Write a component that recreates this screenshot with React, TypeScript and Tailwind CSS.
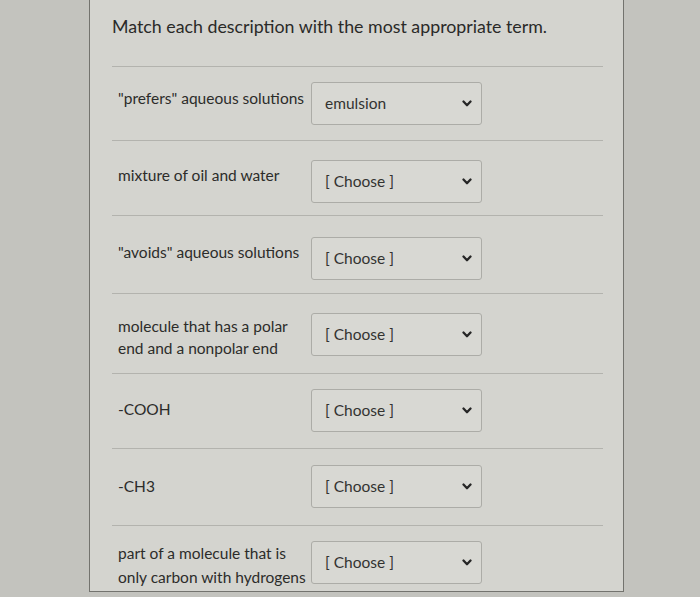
import React from "react";

type Row = {
  label: string[];
  value: string;
  rowClass: string;
  labelClass: string;
};

const rows: Row[] = [
  { label: ['"prefers" aqueous solutions'], value: "emulsion", rowClass: "h-[74px] pt-[15px]", labelClass: "-mt-[11px]" },
  { label: ["mixture of oil and water"], value: "[ Choose ]", rowClass: "h-[75px] pt-[19px]", labelClass: "-mt-[13px]" },
  { label: ['"avoids" aqueous solutions'], value: "[ Choose ]", rowClass: "h-[78px] pt-[21px]", labelClass: "-mt-[13px]" },
  { label: ["molecule that has a polar", "end and a nonpolar end"], value: "[ Choose ]", rowClass: "h-[80px] pt-[19px]", labelClass: "mt-[5px]" },
  { label: ["-COOH"], value: "[ Choose ]", rowClass: "h-[75px] pt-[15px]", labelClass: "-mt-[3px]" },
  { label: ["-CH3"], value: "[ Choose ]", rowClass: "h-[77px] pt-[16px]", labelClass: "-mt-[1px]" },
  { label: ["part of a molecule that is", "only carbon with hydrogens"], value: "[ Choose ]", rowClass: "h-[67px] pt-[15px]", labelClass: "mt-[5px] leading-[24px]" },
];

function Chevron() {
  return (
    <svg width="10" height="7" viewBox="0 0 10 7" className="shrink-0">
      <polyline points="1.5,1.5 5,5.2 8.5,1.5" fill="none" stroke="#262626" strokeWidth="2.3" strokeLinecap="round" strokeLinejoin="round" />
    </svg>
  );
}

export default function App() {
  return (
    <div
      className="w-[700px] h-[597px] overflow-hidden bg-[#c3c3be] text-[#2c2c2a]"
      style={{ fontFamily: 'Lato, "Open Sans", "Liberation Sans", sans-serif' }}
    >
      <div className="ml-[89px] w-[535px] h-[592px] overflow-hidden bg-[#d4d4cf] border-l border-r border-b border-[#73736e] flex flex-col">
        <div className="shrink-0 pl-[22px] pt-[13px] h-[66px]">
          <h1 className="text-[17.8px] leading-[26px] text-[#2a2a28]">
            Match each description with the most appropriate term.
          </h1>
        </div>
        <div className="shrink-0 pl-[22px] pr-[20px] flex flex-col">
          {rows.map((r, i) => (
            <div key={i} className={`shrink-0 border-t border-[#b3b3ae] ${r.rowClass}`}>
              <div className="h-[43px] flex items-center pl-[6px]">
                <div className={`w-[193px] shrink-0 text-[15.5px] leading-[22px] ${r.labelClass}`}>
                  {r.label.map((l, j) => (
                    <div key={j}>{l}</div>
                  ))}
                </div>
                <div className="w-[171px] h-[43px] shrink-0 border border-[#acaca7] rounded-[3px] bg-[#d8d8d3] flex items-center justify-between pl-[13px] pr-[9px]">
                  <span className="text-[15.5px] text-[#333331]">{r.value}</span>
                  <Chevron />
                </div>
              </div>
            </div>
          ))}
        </div>
      </div>
    </div>
  );
}
